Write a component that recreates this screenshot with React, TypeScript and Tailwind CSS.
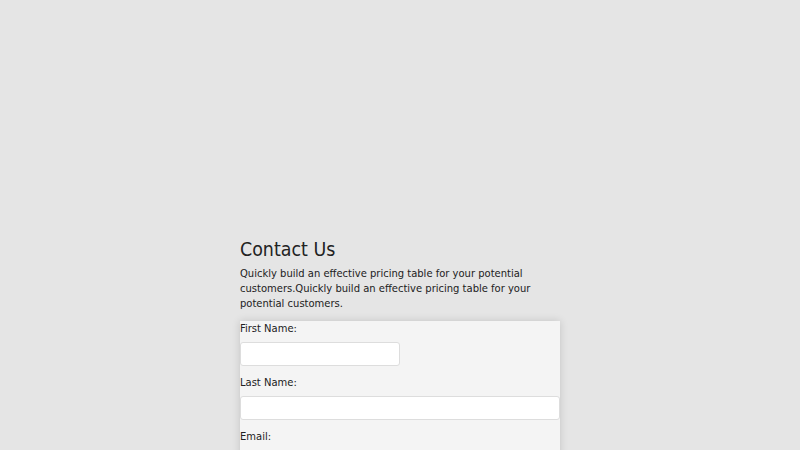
export default function App() {
  return (
    <div
      className="min-h-screen bg-[#e5e5e5] text-[#222] pt-[238px]"
      style={{ fontFamily: '"DejaVu Sans Condensed", "DejaVu Sans", sans-serif' }}
    >
      <div className="w-[320px] mx-auto [font-stretch:condensed]">
        <h1 className="text-[19.4px] leading-[24px] mb-[4px]">Contact Us</h1>
        <p className="text-[11.1px] leading-[15px] mb-[10px]">
          Quickly build an effective pricing table for your potential
          customers.Quickly build an effective pricing table for your potential
          customers.
        </p>
        <form className="bg-[#f4f4f4] shadow-[0_0_8px_rgba(0,0,0,0.15)] pb-4">
          <label className="block text-[11.1px] leading-[15px]">First Name:</label>
          <input
            type="text"
            className="block w-[160px] h-[24px] mt-[6px] mb-[9px] bg-white border border-[#ddd] rounded-[3px]"
          />
          <label className="block text-[11.1px] leading-[15px]">Last Name:</label>
          <input
            type="text"
            className="block w-full h-[24px] mt-[6px] mb-[9px] bg-white border border-[#ddd] rounded-[3px]"
          />
          <label className="block text-[11.1px] leading-[15px]">Email:</label>
          <input
            type="email"
            className="block w-full h-[24px] mt-[6px] mb-[9px] bg-white border border-[#ddd] rounded-[3px]"
          />
          <label className="block text-[11.1px] leading-[15px]">Message:</label>
          <textarea className="block w-full h-[80px] mt-[6px] bg-white border border-[#ddd] rounded-[3px]" />
        </form>
      </div>
    </div>
  );
}
